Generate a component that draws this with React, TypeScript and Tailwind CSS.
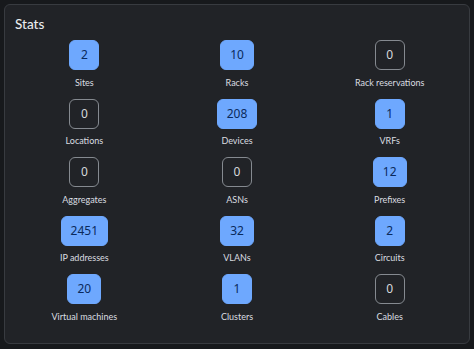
import React from "react";

type Stat = { label: string; value: number };

const stats: Stat[] = [
  { label: "Sites", value: 2 },
  { label: "Racks", value: 10 },
  { label: "Rack reservations", value: 0 },
  { label: "Locations", value: 0 },
  { label: "Devices", value: 208 },
  { label: "VRFs", value: 1 },
  { label: "Aggregates", value: 0 },
  { label: "ASNs", value: 0 },
  { label: "Prefixes", value: 12 },
  { label: "IP addresses", value: 2451 },
  { label: "VLANs", value: 32 },
  { label: "Circuits", value: 2 },
  { label: "Virtual machines", value: 20 },
  { label: "Clusters", value: 1 },
  { label: "Cables", value: 0 },
];

export default function App() {
  return (
    <div
      className="w-[474px] h-[349px] bg-[#17191c] p-[4px]"
      style={{ fontFamily: 'Lato, "Noto Sans", sans-serif' }}
    >
      <div className="h-[340px] rounded-[6px] border border-[#383b40] bg-[#212327] pt-[10px] px-[3px] pb-[20px]">
        <div className="pl-[7px] text-[13.5px] leading-[18px] font-medium text-[#e9ecef]">Stats</div>
        <div className="mt-[7px] grid grid-cols-3 gap-y-[10px]">
          {stats.map((s) => (
            <div key={s.label} className="flex flex-col items-center">
              <div
                className={
                  s.value > 0
                    ? "h-[30px] min-w-[30px] px-[9px] flex items-center justify-center rounded-[6px] border border-[#6ea8fe] bg-[#6ea8fe] text-[#0a2a5c] text-[12px]"
                    : "h-[30px] min-w-[30px] px-[9px] flex items-center justify-center rounded-[6px] border border-[#858a90] bg-transparent text-[#d6d9dc] text-[12px]"
                }
                style={{ fontFamily: '"Noto Sans", sans-serif' }}
              >
                {s.value}
              </div>
              <div className="mt-[5.5px] text-[9px] leading-[13px] text-[#dadde0]">{s.label}</div>
            </div>
          ))}
        </div>
      </div>
    </div>
  );
}
